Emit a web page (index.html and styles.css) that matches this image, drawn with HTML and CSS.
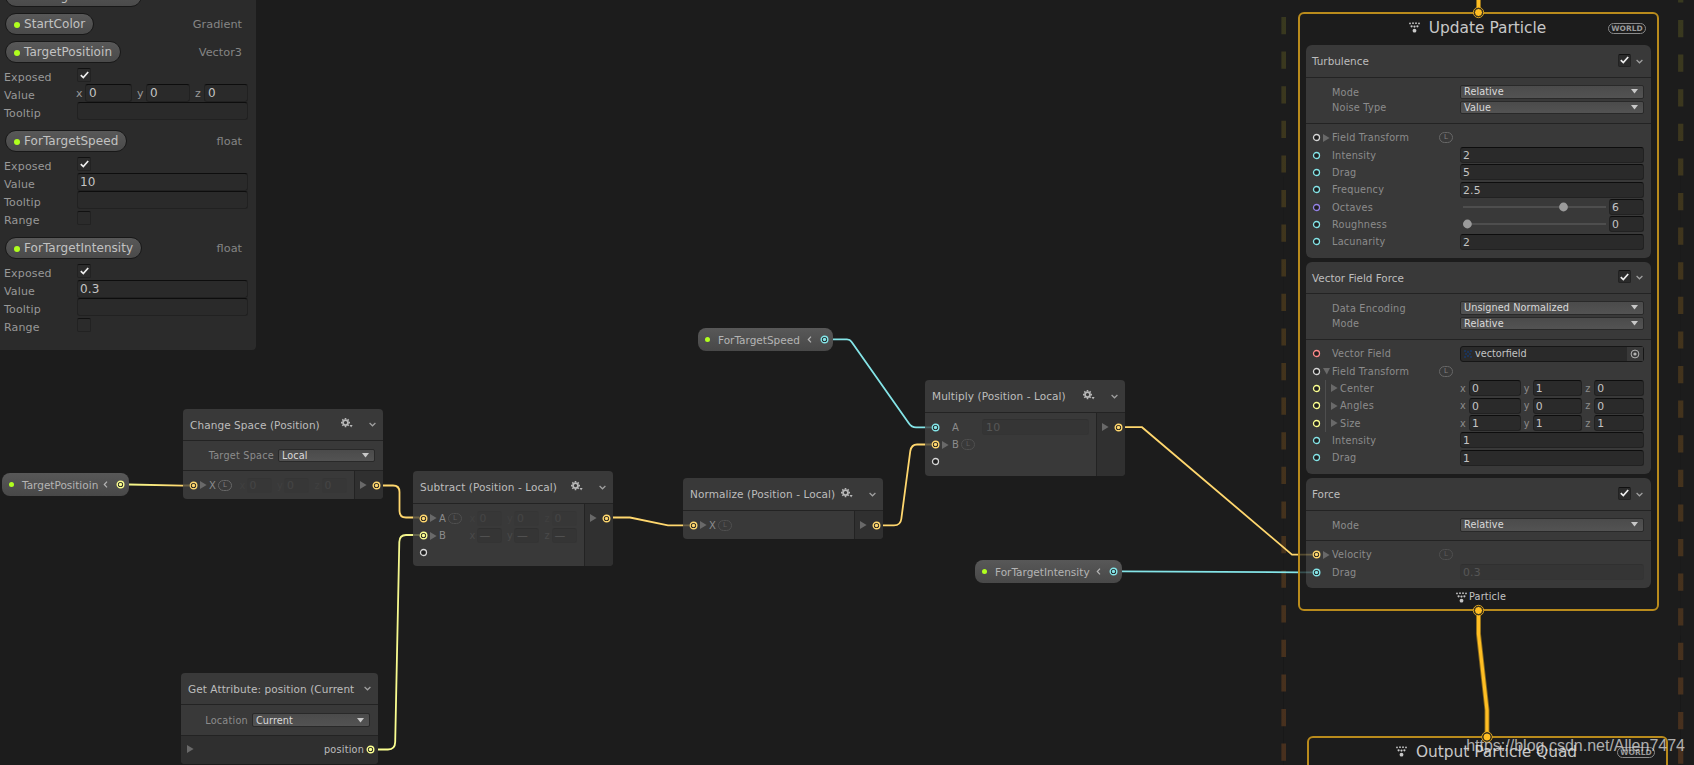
FILE: index.html
```
<!DOCTYPE html>
<html lang="en">
<head>
    <meta charset="UTF-8">
    <meta name="viewport" content="width=device-width, initial-scale=1.0">
    <title>Visual Effect Graph</title>
    <link rel="stylesheet" href="styles.css">
</head>
<body>
    <!-- Shared icons -->
    <svg class="defs" width="0" height="0">
        <symbol id="port" viewBox="0 0 9 9"><circle cx="4.5" cy="4.5" r="3" fill="#202020" stroke="currentColor" stroke-width="1.3"/></symbol>
        <symbol id="port-on" viewBox="0 0 9 9"><circle cx="4.5" cy="4.5" r="3.3" fill="#202020" stroke="currentColor" stroke-width="1.4"/><circle cx="4.5" cy="4.5" r="1.7" fill="currentColor"/></symbol>
        <symbol id="tri" viewBox="0 0 7 8"><path d="M0 0L6.6 4L0 8Z" fill="currentColor"/></symbol>
        <symbol id="tri-down" viewBox="0 0 7 8"><path d="M0 1H7L3.8 7.5Z" fill="currentColor"/></symbol>
        <symbol id="drop" viewBox="0 0 7 5"><path d="M0 0H7L3.5 4.4Z" fill="currentColor"/></symbol>
        <symbol id="chev" viewBox="0 0 7 5"><path d="M.6 1L3.5 3.8L6.4 1" fill="none" stroke="currentColor" stroke-width="1.2"/></symbol>
        <symbol id="chev-left" viewBox="0 0 5 7"><path d="M4 .6L1.3 3.5L4 6.4" fill="none" stroke="currentColor" stroke-width="1.2"/></symbol>
        <symbol id="check" viewBox="0 0 9 8"><path d="M.8 4.2L3.3 6.6L8.2 1" fill="none" stroke="currentColor" stroke-width="1.7"/></symbol>
        <symbol id="gear" viewBox="0 0 12 11">
            <circle cx="4.5" cy="4.6" r="2.5" fill="none" stroke="currentColor" stroke-width="1.7"/>
            <path d="M4.5 0V1.6M4.5 7.6V9.2M0 4.6H1.6M7.4 4.6H9M1.3 1.4L2.4 2.5M6.6 6.7L7.7 7.8M1.3 7.8L2.4 6.7M6.6 2.5L7.7 1.4" stroke="currentColor" stroke-width="1.6"/>
            <path d="M8.6 6.9H11.6L10.1 9.6Z" fill="currentColor"/>
        </symbol>
        <symbol id="particle" viewBox="0 0 11 11"><g fill="currentColor">
            <circle cx="1" cy="1.4" r=".9"/><circle cx="4" cy="1.2" r=".9"/><circle cx="7" cy="1.2" r=".9"/><circle cx="10" cy="1.4" r=".9"/>
            <circle cx="2.6" cy="4.3" r="1.1"/><circle cx="5.5" cy="4.6" r="1.1"/><circle cx="8.4" cy="4.3" r="1.1"/><circle cx="5.5" cy="8.7" r="1.9"/>
        </g></symbol>
    </svg>

    <div class="graph">
        <!-- System outline and edges -->
        <svg class="edges" width="1694" height="765" viewBox="0 0 1694 765">
            <defs>
                <linearGradient id="dash" x1="0" y1="0" x2="0" y2="765" gradientUnits="userSpaceOnUse"><stop offset="0" stop-color="#38391f"/><stop offset=".4" stop-color="#42341c"/><stop offset="1" stop-color="#48301e"/></linearGradient>
                <linearGradient id="cast" x1="129" y1="0" x2="183" y2="0" gradientUnits="userSpaceOnUse"><stop offset="0" stop-color="#f3f78c"/><stop offset="1" stop-color="#ffd76e"/></linearGradient>
                <linearGradient id="cast-sub" x1="0" y1="750" x2="0" y2="535" gradientUnits="userSpaceOnUse"><stop offset="0" stop-color="#fbff90"/><stop offset="1" stop-color="#f3f58c"/></linearGradient>
            </defs>
            <g stroke="url(#dash)" stroke-dasharray="17.2 17.4">
                <path d="M1283.7 17V765.1L1283.8 765" stroke-width="4.6"/>
                <path d="M1680.7 -14.6V765.1L1680.8 765" stroke-width="5.2"/>
            </g>
            <g fill="none" stroke-width="1.8">
                <path d="M129 484.5L183 485.6" stroke="url(#cast)"/>
                <path d="M383 485.5H393Q399.5 485.5 399.5 492V511Q399.5 517.5 406 517.5H413" stroke="#ffd76e"/>
                <path d="M378 749.5H388Q395 749.5 395.2 742L399.3 542Q399.5 535 406 535H413" stroke="url(#cast-sub)"/>
                <path d="M613 517.5H630L668 525.3H683" stroke="#ffd76e"/>
                <path d="M883 525.3H894Q900.5 525.3 901.3 519L910.3 451Q911.5 444.5 917 444.5H925" stroke="#ffd76e"/>
                <path d="M833 339.4H847Q850 339.4 851.5 341.8L909 423.5Q911.5 427.3 916 427.3H925" stroke="#84e4e7"/>
                <path d="M1125 427.2H1142L1292 554.6H1300" stroke="#ffd76e"/>
                <path d="M1122 571.4L1300 572.3" stroke="#84e4e7"/>
            </g>
            <g fill="none" stroke="#8a6a1c" stroke-width="5"><path d="M1478.5 0V12M1478.5 610V634L1487 710V737"/></g>
            <g fill="none" stroke="#ffbe23" stroke-width="3.2"><path d="M1478.5 0V12M1478.5 610V634L1487 710V737"/></g>
        </svg>

        <!-- Blackboard -->
        <div class="blackboard">
            <div class="prop"><div class="prop-head"><span class="pill">ForTargetDistance</span><span class="type">float</span></div></div>
            <div class="prop"><div class="prop-head"><span class="pill">StartColor</span><span class="type">Gradient</span></div></div>
            <div class="prop open">
                <div class="prop-head"><span class="pill">TargetPositioin</span><span class="type">Vector3</span></div>
                <div class="prop-row"><label>Exposed</label><span class="box"><svg width="9" height="8"><use href="#check"/></svg></span></div>
                <div class="prop-row"><label>Value</label><div class="vec"><i>x</i><b>0</b><i>y</i><b>0</b><i>z</i><b>0</b></div></div>
                <div class="prop-row"><label>Tooltip</label><span class="input"></span></div>
            </div>
            <div class="prop open">
                <div class="prop-head"><span class="pill">ForTargetSpeed</span><span class="type">float</span></div>
                <div class="prop-row"><label>Exposed</label><span class="box"><svg width="9" height="8"><use href="#check"/></svg></span></div>
                <div class="prop-row"><label>Value</label><span class="input">10</span></div>
                <div class="prop-row"><label>Tooltip</label><span class="input"></span></div>
                <div class="prop-row"><label>Range</label><span class="box"></span></div>
            </div>
            <div class="prop open">
                <div class="prop-head"><span class="pill">ForTargetIntensity</span><span class="type">float</span></div>
                <div class="prop-row"><label>Exposed</label><span class="box"><svg width="9" height="8"><use href="#check"/></svg></span></div>
                <div class="prop-row"><label>Value</label><span class="input">0.3</span></div>
                <div class="prop-row"><label>Tooltip</label><span class="input"></span></div>
                <div class="prop-row"><label>Range</label><span class="box"></span></div>
            </div>
        </div>

        <!-- Parameter nodes -->
        <div class="param param-position"><span>TargetPositioin</span><svg width="5" height="7"><use href="#chev-left"/></svg><svg class="vec3" width="9" height="9"><use href="#port-on"/></svg></div>
        <div class="param param-speed"><span>ForTargetSpeed</span><svg width="5" height="7"><use href="#chev-left"/></svg><svg class="float" width="9" height="9"><use href="#port-on"/></svg></div>
        <div class="param param-intensity"><span>ForTargetIntensity</span><svg width="5" height="7"><use href="#chev-left"/></svg><svg class="float" width="9" height="9"><use href="#port-on"/></svg></div>

        <!-- Operators -->
        <div class="node change-space">
            <div class="node-head"><span>Change Space (Position)</span><svg class="gear" width="12" height="11"><use href="#gear"/></svg><svg class="chev" width="7" height="5"><use href="#chev"/></svg></div>
            <div class="node-setting"><label>Target Space</label><span class="select">Local<svg width="7" height="5"><use href="#drop"/></svg></span></div>
            <div class="node-body">
                <div class="inputs">
                    <div class="in"><svg class="pos" width="9" height="9"><use href="#port-on"/></svg><svg class="tri" width="7" height="8"><use href="#tri"/></svg><span>X</span><em>L</em><div class="vec ghost"><i>x</i><b>0</b><i>y</i><b>0</b><i>z</i><b>0</b></div></div>
                </div>
                <div class="outputs"><svg class="tri" width="7" height="8"><use href="#tri"/></svg><svg class="pos" width="9" height="9"><use href="#port-on"/></svg></div>
            </div>
        </div>

        <div class="node get-attribute">
            <div class="node-head"><span>Get Attribute: position (Current</span><svg class="chev" width="7" height="5"><use href="#chev"/></svg></div>
            <div class="node-setting"><label>Location</label><span class="select">Current<svg width="7" height="5"><use href="#drop"/></svg></span></div>
            <div class="node-body single">
                <svg class="tri" width="7" height="8"><use href="#tri"/></svg><span class="out-name">position</span><svg class="vec3" width="9" height="9"><use href="#port-on"/></svg>
            </div>
        </div>

        <div class="node subtract">
            <div class="node-head"><span>Subtract (Position - Local)</span><svg class="gear" width="12" height="11"><use href="#gear"/></svg><svg class="chev" width="7" height="5"><use href="#chev"/></svg></div>
            <div class="node-body">
                <div class="inputs">
                    <div class="in"><svg class="pos" width="9" height="9"><use href="#port-on"/></svg><svg class="tri" width="7" height="8"><use href="#tri"/></svg><span>A</span><em class="dim">L</em><div class="vec ghost"><i>x</i><b>0</b><i>y</i><b>0</b><i>z</i><b>0</b></div></div>
                    <div class="in"><svg class="vec3" width="9" height="9"><use href="#port-on"/></svg><svg class="tri" width="7" height="8"><use href="#tri"/></svg><span>B</span><div class="vec ghost mixed"><i>x</i><b>—</b><i>y</i><b>—</b><i>z</i><b>—</b></div></div>
                    <div class="in"><svg class="any" width="9" height="9"><use href="#port"/></svg></div>
                </div>
                <div class="outputs"><svg class="tri" width="7" height="8"><use href="#tri"/></svg><svg class="pos" width="9" height="9"><use href="#port-on"/></svg></div>
            </div>
        </div>

        <div class="node normalize">
            <div class="node-head"><span>Normalize (Position - Local)</span><svg class="gear" width="12" height="11"><use href="#gear"/></svg><svg class="chev" width="7" height="5"><use href="#chev"/></svg></div>
            <div class="node-body">
                <div class="inputs">
                    <div class="in"><svg class="pos" width="9" height="9"><use href="#port-on"/></svg><svg class="tri" width="7" height="8"><use href="#tri"/></svg><span>X</span><em class="dim">L</em></div>
                </div>
                <div class="outputs"><svg class="tri" width="7" height="8"><use href="#tri"/></svg><svg class="pos" width="9" height="9"><use href="#port-on"/></svg></div>
            </div>
        </div>

        <div class="node multiply">
            <div class="node-head"><span>Multiply (Position - Local)</span><svg class="gear" width="12" height="11"><use href="#gear"/></svg><svg class="chev" width="7" height="5"><use href="#chev"/></svg></div>
            <div class="node-body">
                <div class="inputs">
                    <div class="in"><svg class="float" width="9" height="9"><use href="#port-on"/></svg><svg class="tri" width="7" height="8"></svg><span>A</span><div class="ghost-input">10</div></div>
                    <div class="in"><svg class="pos" width="9" height="9"><use href="#port-on"/></svg><svg class="tri" width="7" height="8"><use href="#tri"/></svg><span>B</span><em class="dim">L</em></div>
                    <div class="in"><svg class="any" width="9" height="9"><use href="#port"/></svg></div>
                </div>
                <div class="outputs"><svg class="tri" width="7" height="8"><use href="#tri"/></svg><svg class="pos" width="9" height="9"><use href="#port-on"/></svg></div>
            </div>
        </div>

        <!-- Update context -->
        <div class="context update">
            <div class="context-head"><svg width="11" height="11"><use href="#particle"/></svg><h1>Update Particle</h1><span class="world">WORLD</span></div>

            <div class="block turbulence">
                <div class="block-head"><span>Turbulence</span><span class="box"><svg width="9" height="8"><use href="#check"/></svg></span><svg class="chev" width="7" height="5"><use href="#chev"/></svg></div>
                <div class="settings">
                    <div class="setting"><label>Mode</label><span class="select">Relative<svg width="7" height="5"><use href="#drop"/></svg></span></div>
                    <div class="setting"><label>Noise Type</label><span class="select">Value<svg width="7" height="5"><use href="#drop"/></svg></span></div>
                </div>
                <div class="slots">
                    <div class="slot"><svg class="any" width="9" height="9"><use href="#port"/></svg><svg class="tri" width="7" height="8"><use href="#tri"/></svg><label>Field Transform</label><em>L</em></div>
                    <div class="slot"><svg class="float" width="9" height="9"><use href="#port"/></svg><label>Intensity</label><span class="input">2</span></div>
                    <div class="slot"><svg class="float" width="9" height="9"><use href="#port"/></svg><label>Drag</label><span class="input">5</span></div>
                    <div class="slot"><svg class="float" width="9" height="9"><use href="#port"/></svg><label>Frequency</label><span class="input">2.5</span></div>
                    <div class="slot"><svg class="uint" width="9" height="9"><use href="#port"/></svg><label>Octaves</label><div class="slider"><svg width="143" height="10"><path d="M0 5H143" stroke="#656565"/><circle cx="100.5" cy="5" r="4.4" fill="#9b9b9b"/></svg><span class="input">6</span></div></div>
                    <div class="slot"><svg class="float" width="9" height="9"><use href="#port"/></svg><label>Roughness</label><div class="slider"><svg width="143" height="10"><path d="M0 5H143" stroke="#656565"/><circle cx="4.4" cy="5" r="4.4" fill="#9b9b9b"/></svg><span class="input">0</span></div></div>
                    <div class="slot"><svg class="float" width="9" height="9"><use href="#port"/></svg><label>Lacunarity</label><span class="input">2</span></div>
                </div>
            </div>

            <div class="block vector-field">
                <div class="block-head"><span>Vector Field Force</span><span class="box"><svg width="9" height="8"><use href="#check"/></svg></span><svg class="chev" width="7" height="5"><use href="#chev"/></svg></div>
                <div class="settings">
                    <div class="setting"><label>Data Encoding</label><span class="select">Unsigned Normalized<svg width="7" height="5"><use href="#drop"/></svg></span></div>
                    <div class="setting"><label>Mode</label><span class="select">Relative<svg width="7" height="5"><use href="#drop"/></svg></span></div>
                </div>
                <div class="slots">
                    <div class="slot"><svg class="texture" width="9" height="9"><use href="#port"/></svg><label>Vector Field</label>
                        <span class="input object">
                            <svg width="8" height="8" viewBox="0 0 8 8"><path d="M0 0H2V2H0ZM3 1H5V3H3ZM6 0H8V2H6ZM1 3H3V5H1ZM5 3H7V5H5ZM0 6H2V8H0ZM3 5H5V7H3ZM6 6H8V8H6Z" fill="#1c3458"/></svg>vectorfield
                            <u><svg width="10" height="10" viewBox="0 0 10 10"><circle cx="5" cy="5" r="3.9" fill="none" stroke="#b4b4b4"/><circle cx="5" cy="5" r="1.6" fill="#b4b4b4"/></svg></u>
                        </span>
                    </div>
                    <div class="slot"><svg class="any" width="9" height="9"><use href="#port"/></svg><svg class="tri" width="7" height="8"><use href="#tri-down"/></svg><label>Field Transform</label><em>L</em></div>
                    <div class="slot child"><svg class="vec3" width="9" height="9"><use href="#port"/></svg><label><svg class="tri" width="7" height="8"><use href="#tri"/></svg>Center</label><div class="vec"><i>x</i><b>0</b><i>y</i><b>1</b><i>z</i><b>0</b></div></div>
                    <div class="slot child"><svg class="vec3" width="9" height="9"><use href="#port"/></svg><label><svg class="tri" width="7" height="8"><use href="#tri"/></svg>Angles</label><div class="vec"><i>x</i><b>0</b><i>y</i><b>0</b><i>z</i><b>0</b></div></div>
                    <div class="slot child"><svg class="vec3" width="9" height="9"><use href="#port"/></svg><label><svg class="tri" width="7" height="8"><use href="#tri"/></svg>Size</label><div class="vec"><i>x</i><b>1</b><i>y</i><b>1</b><i>z</i><b>1</b></div></div>
                    <div class="slot"><svg class="float" width="9" height="9"><use href="#port"/></svg><label>Intensity</label><span class="input">1</span></div>
                    <div class="slot"><svg class="float" width="9" height="9"><use href="#port"/></svg><label>Drag</label><span class="input">1</span></div>
                </div>
            </div>

            <div class="block force">
                <div class="block-head"><span>Force</span><span class="box"><svg width="9" height="8"><use href="#check"/></svg></span><svg class="chev" width="7" height="5"><use href="#chev"/></svg></div>
                <div class="settings one">
                    <div class="setting"><label>Mode</label><span class="select">Relative<svg width="7" height="5"><use href="#drop"/></svg></span></div>
                </div>
                <div class="slots">
                    <div class="slot"><svg class="pos" width="9" height="9"><use href="#port-on"/></svg><svg class="tri" width="7" height="8"><use href="#tri"/></svg><label>Velocity</label><em class="dim">L</em></div>
                    <div class="slot"><svg class="float" width="9" height="9"><use href="#port-on"/></svg><label>Drag</label><span class="input off">0.3</span></div>
                </div>
            </div>

            <div class="context-foot"><svg width="11" height="11"><use href="#particle"/></svg>Particle</div>
        </div>

        <!-- Output context -->
        <div class="context output">
            <div class="context-head"><svg width="11" height="11"><use href="#particle"/></svg><h1>Output Particle Quad</h1><span class="world">WORLD</span></div>
        </div>

        <!-- Faded edge ends and flow anchors -->
        <svg class="overlay" width="1694" height="765" viewBox="0 0 1694 765">
            <g fill="none" stroke-width="1.8" opacity=".25">
                <path d="M183 485.5H189M413 517.5H419M683 525.3H689M925 444.5H931M1300 554.6H1312" stroke="#ffd76e"/>
                <path d="M413 535H419" stroke="#f3f58c"/>
                <path d="M925 427.3H931M1300 572.3H1312" stroke="#84e4e7"/>
            </g>
            <g fill="#ffbe23" stroke="#1c1c1c" stroke-width=".8">
                <circle cx="1478.5" cy="12.5" r="5.2" stroke="#ffbe23" fill="#1c1c1c"/><circle cx="1478.5" cy="12.5" r="4"/>
                <circle cx="1478.5" cy="610.5" r="5.2" stroke="#ffbe23" fill="#1c1c1c"/><circle cx="1478.5" cy="610.5" r="4"/>
                <circle cx="1487" cy="737" r="5.2" stroke="#ffbe23" fill="#1c1c1c"/><circle cx="1487" cy="737" r="4"/>
            </g>
        </svg>
        <div class="watermark">https://blog.csdn.net/Allen7474</div>
    </div>
</body>
</html>
```
FILE: styles.css
```
* {
    box-sizing: border-box;
}
body {
    margin: 0;
    background-color: #1c1c1c;
    font-family: "DejaVu Sans", Verdana, sans-serif;
    font-size: 9.7px;
    color: #8c8c8c;
    overflow: hidden;
}
svg {
    display: block;
    flex: none;
}
.defs {
    position: absolute;
}
.graph {
    position: relative;
    width: 1694px;
    height: 765px;
    overflow: hidden;
}
.edges,
.overlay {
    position: absolute;
    left: 0;
    top: 0;
}

/* port colours */
.float { color: #84e4e7; }
.vec3 { color: #fbff90; }
.pos { color: #ffd76e; }
.any { color: #d6d6d6; }
.uint { color: #9481e6; }
.texture { color: #ff8b8b; }
.tri { color: #696969; }

/* shared controls */
label {
    letter-spacing: 0.23px;
}
.input,
.vec b,
.ghost-input {
    display: block;
    background: #2a2a2a;
    border: 1px solid #212121;
    border-top-color: #0d0d0d;
    border-radius: 3px;
    color: #c4c4c4;
    font-weight: normal;
    letter-spacing: 0.2px;
    white-space: nowrap;
}
.vec {
    display: flex;
    align-items: center;
}
.vec i {
    font-style: normal;
}
.select {
    display: flex;
    align-items: center;
    justify-content: space-between;
    height: 13.5px;
    padding: 0 5px 0 3px;
    background: linear-gradient(#4b4b4b, #535353);
    border: 1px solid #292929;
    border-radius: 2px;
    color: #dadada;
    letter-spacing: 0.08px;
    line-height: 11px;
}
.select svg {
    color: #c8c8c8;
}
.box {
    display: flex;
    align-items: center;
    justify-content: center;
    width: 14px;
    height: 14px;
    background: #2a2a2a;
    border: 1px solid #222;
    border-top-color: #111;
    border-radius: 2px;
    color: #eee;
}
em {
    flex: none;
    width: 14px;
    height: 11px;
    border: 1px solid #676767;
    border-radius: 6px;
    font-size: 7px;
    font-style: normal;
    line-height: 9px;
    text-align: center;
    color: #808080;
}
em.dim {
    border-color: #4f4f4f;
    color: #5c5c5c;
}

/* blackboard */
.blackboard {
    position: absolute;
    left: 0;
    top: -15px;
    width: 256px;
    height: 365px;
    background: #2b2b2b;
    border-radius: 0 0 4px 0;
    font-size: 11px;
    color: #989898;
}
.prop {
    margin-bottom: 6px;
}
.prop.open {
    margin-bottom: 10px;
}
.prop-head {
    display: flex;
    align-items: center;
    justify-content: space-between;
    height: 22px;
    padding: 0 14px 0 5px;
    margin-bottom: 3px;
}
.prop:not(.open) .prop-head {
    margin-bottom: 0;
}
.pill {
    display: flex;
    align-items: center;
    height: 22px;
    padding: 0 8px 0 8px;
    background: linear-gradient(#585858, #4a4a4a);
    border: 1px solid #181818;
    border-radius: 11px;
    color: #c2c2c2;
    font-size: 12px;
    letter-spacing: 0.06px;
}
.pill::before {
    content: "";
    width: 6px;
    height: 6px;
    margin: 2px 4px 0 0;
    border-radius: 50%;
    background: #b0ff1e;
}
.type {
    font-size: 11.3px;
    color: #858585;
}
.prop-row {
    display: flex;
    height: 18px;
    padding: 0 8px 0 4px;
}
.prop-row label {
    width: 73px;
    padding-top: 5px;
    line-height: 14px;
    letter-spacing: 0.15px;
}
.prop-row .box {
    margin-top: 2px;
    background: none;
}
.prop-row .input {
    width: 171px;
    height: 18px;
    padding-left: 2px;
    font-size: 12px;
    line-height: 17px;
}
.prop-row .vec i {
    width: 9px;
}
.prop-row .vec i + b {
    width: 47px;
}
.prop-row .vec b {
    height: 18px;
    padding-left: 3px;
    font-size: 12px;
    line-height: 17px;
}
.prop-row .vec b + i {
    margin-left: 5px;
}
.prop-row .vec b:not(:nth-child(2)) {
    width: 44px;
}

/* parameter nodes */
.param {
    position: absolute;
    display: flex;
    align-items: center;
    height: 23px;
    padding: 0 4px 0 7px;
    background: linear-gradient(#585858, #484848);
    border-radius: 8px;
    color: #b4b4b4;
    font-size: 10.5px;
}
.param::before {
    content: "";
    width: 5px;
    height: 5px;
    margin-right: 8px;
    border-radius: 50%;
    background: #b0ff1e;
}
.param span {
    flex: 1;
}
.param svg {
    margin-right: 8px;
}
.param svg:last-child {
    margin-right: 0;
}
.param-position {
    left: 2px;
    top: 473px;
    width: 127px;
}
.param-speed {
    left: 698px;
    top: 328px;
    width: 135px;
}
.param-intensity {
    left: 975px;
    top: 560px;
    width: 147px;
}

/* operator nodes */
.node {
    position: absolute;
    width: 200px;
    display: flex;
    flex-direction: column;
    background: #393939;
    border-radius: 4px;
    overflow: hidden;
}
.change-space { left: 183px; top: 409px; height: 90px; }
.get-attribute { left: 181px; top: 673px; width: 197px; height: 91px; }
.subtract { left: 413px; top: 471px; height: 95px; }
.normalize { left: 683px; top: 478px; height: 61px; }
.multiply { left: 925px; top: 380px; height: 96px; }
.node-head {
    display: flex;
    align-items: center;
    height: 33px;
    padding: 0 7px;
    border-bottom: 1px solid #232323;
    color: #bdbdbd;
    font-size: 10.5px;
    letter-spacing: 0.08px;
    white-space: nowrap;
}
.node-head span {
    flex: 1;
}
.gear {
    margin: -2px 16px 0 0;
    color: #b8b8b8;
}
.chev {
    color: #a0a0a0;
}
.change-space .node-head,
.get-attribute .node-head {
    height: 32px;
}
.node-setting {
    display: flex;
    align-items: center;
    justify-content: flex-end;
    height: 30px;
    padding: 0 8px;
    border-bottom: 1px solid #232323;
}
.node-setting label {
    margin-right: 4px;
}
.node-setting .select {
    width: 97px;
}
.get-attribute .node-setting {
    height: 31px;
    padding-right: 8px;
}
.get-attribute .select {
    width: 118px;
}
.node-body {
    flex: 1;
    display: flex;
}
.inputs {
    flex: 1;
    padding-top: 5.5px;
}
.in {
    display: flex;
    align-items: center;
    height: 17.35px;
    padding-left: 6px;
}
.in .tri {
    margin: 0 2px 0 2px;
}
.in span {
    width: 9px;
    font-size: 10px;
}
.multiply .in span {
    margin-left: 1px;
}
.ghost {
    margin-left: auto;
    padding-right: 2px;
    opacity: .08;
}
.ghost i {
    width: 7px;
}
.ghost b {
    width: 25px;
    height: 15px;
    margin-right: 5.5px;
    padding-left: 2px;
    font-size: 10.8px;
    line-height: 13px;
}
.ghost.mixed {
    opacity: .2;
}
.ghost-input {
    width: 107px;
    height: 16px;
    margin-left: 21px;
    padding-left: 3px;
    font-size: 11px;
    line-height: 15px;
    opacity: .2;
}
.outputs {
    display: flex;
    align-items: center;
    align-self: stretch;
    gap: 5px;
    width: 29px;
    padding: 0 0 0 5px;
    background: #303030;
    border-left: 1px solid #232323;
}
.subtract .outputs,
.multiply .outputs {
    align-items: flex-start;
    padding-top: 10px;
}
.single {
    align-items: center;
    padding: 0 3px 2px 6px;
    background: #2f2f2f;
}
.out-name {
    flex: 1;
    margin-right: 2px;
    text-align: right;
    letter-spacing: 0.2px;
    color: #bdbdbd;
}

/* contexts */
.context {
    position: absolute;
    width: 361px;
    padding: 0 6px;
    border: 2px solid #b98b1c;
    border-radius: 6px;
    background: #1c1c1c;
}
.update {
    left: 1298px;
    top: 12px;
    height: 599px;
}
.output {
    left: 1307px;
    top: 736px;
    height: 60px;
}
.context-head {
    display: grid;
    grid-template-columns: 1fr auto 1fr;
    align-items: center;
    gap: 9px;
    height: 27px;
    margin-bottom: 4px;
    padding-left: 18px;
    color: #c8c8c8;
}
.context-head svg {
    justify-self: end;
}
.context-head h1 {
    margin: 0;
    font-size: 15.4px;
    font-weight: normal;
    white-space: nowrap;
}
.world {
    justify-self: end;
    width: 38px;
    height: 11px;
    margin: 2px 5px 0 0;
    border: 1px solid #8a8a8a;
    border-radius: 6px;
    font-size: 7.5px;
    font-weight: bold;
    line-height: 9px;
    text-align: center;
    color: #9a9a9a;
}
.block {
    width: 345px;
    margin-bottom: 4px;
    background: #393939;
    border-radius: 6px;
}
.turbulence { height: 213px; }
.vector-field { height: 212px; }
.force { height: 110px; }
.block-head {
    display: flex;
    align-items: center;
    height: 33px;
    padding: 0 8px 0 6px;
    border-bottom: 1px solid #232323;
    color: #bdbdbd;
    font-size: 10.4px;
}
.vector-field .block-head {
    height: 32px;
}
.block-head span:first-child {
    flex: 1;
}
.block-head .box {
    width: 13px;
    height: 13px;
    margin: -2px 5px 0 0;
}
.settings {
    height: 46px;
    padding: 6px 7px 0 26px;
    border-bottom: 1px solid #232323;
}
.settings.one {
    height: 30px;
}
.setting {
    display: flex;
    align-items: center;
    height: 15.6px;
}
.setting label {
    flex: 1;
    padding-top: 1px;
}
.setting .select {
    width: 184px;
}
.slots {
    padding: 5px 7px 0 6px;
}
.slot {
    display: grid;
    grid-template-columns: 9px 11px 107px 21px 184px;
    align-items: center;
    height: 17.35px;
}
.slot > .tri {
    margin-left: 2px;
    grid-column: 2;
}
.slot > label {
    grid-column: 3;
}
.slot > .input,
.slot > .vec,
.slider {
    grid-column: 5;
}
.slot .input,
.slot .vec b {
    height: 16px;
    padding-left: 2px;
    font-size: 10.8px;
    line-height: 15px;
}
.slider {
    display: flex;
    align-items: center;
    padding-left: 3px;
}
.slider .input {
    width: 35px;
    margin-left: 3px;
}
.child > label {
    display: flex;
    align-items: center;
    height: 17.35px;
    margin-left: -7px;
    padding-left: 5px;
    border-left: 1px solid #4e4e4e;
}
.child label .tri {
    margin-right: 2px;
}
.slot .vec i {
    width: 9px;
}
.slot .vec b {
    width: 52px;
    margin-right: 3px;
}
.slot .vec b:nth-child(n+3) {
    width: 50px;
}
.slot .vec b:last-child {
    margin-right: 0;
}
.slot .object {
    display: flex;
    align-items: center;
    height: 16px;
    padding: 0 0 0 3px;
    font-size: 9.7px;
    letter-spacing: 0;
    line-height: 13px;
    border-color: #161616;
}
.object > svg {
    margin-right: 3px;
}
.object u {
    margin-left: auto;
    width: 16px;
    height: 14px;
    padding: 2px 3px;
    background: #393939;
}
.slot .off {
    opacity: .2;
}
.context-foot {
    display: flex;
    justify-content: center;
    align-items: center;
    gap: 2px;
    height: 10px;
    margin-top: -1px;
    padding-left: 5px;
    letter-spacing: 0.15px;
    color: #c4c4c4;
}
.context-foot svg {
    margin-top: 3px;
}

.watermark {
    position: absolute;
    right: 9px;
    top: 736px;
    font-family: "Liberation Sans", Arial, sans-serif;
    font-size: 16px;
    line-height: 20px;
    color: rgba(225, 225, 225, .75);
}
```
